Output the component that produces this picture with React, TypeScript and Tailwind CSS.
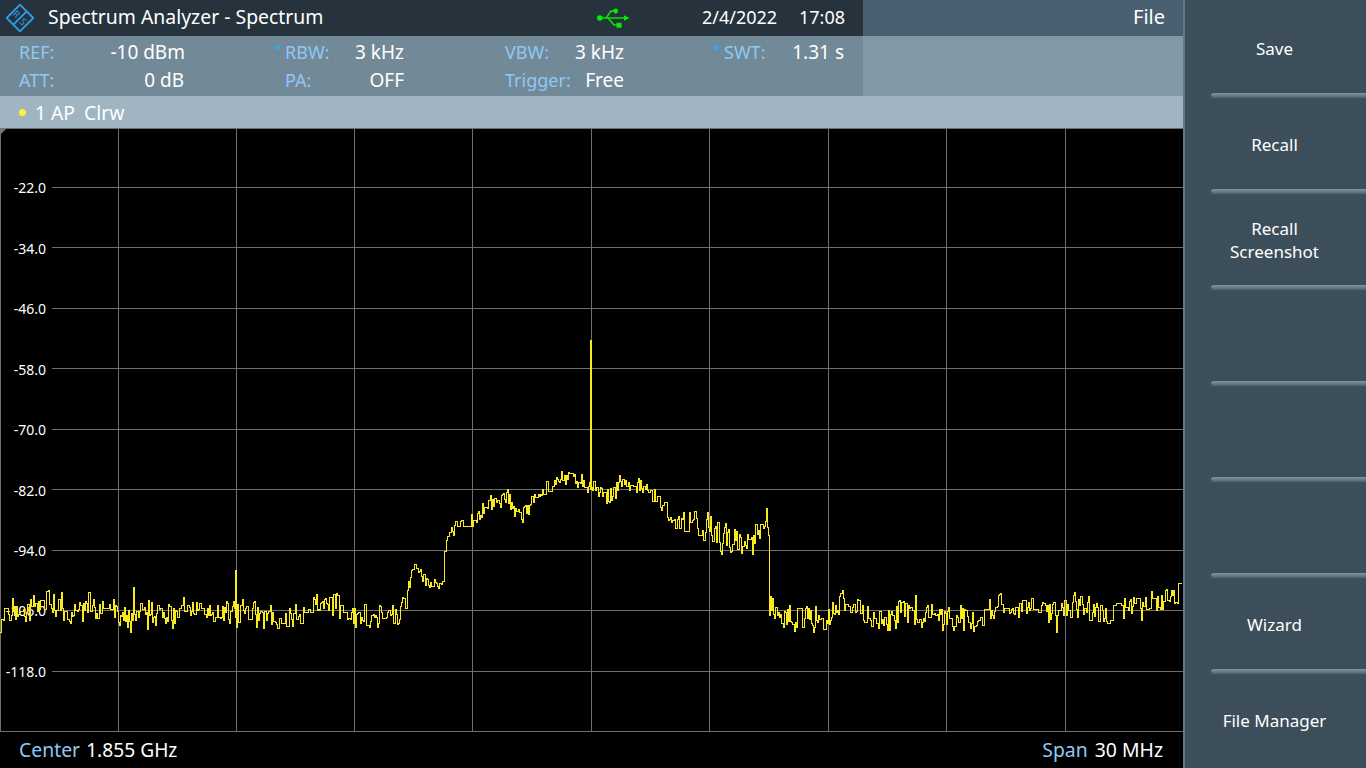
import { useMemo } from 'react';

const FONT = { fontFamily: '"Noto Sans", sans-serif' };

const V_LINES = [118, 236, 354, 472, 591, 709, 828, 946, 1065];
const H_LINES = [
  { y: 59, label: '-22.0' },
  { y: 119.5, label: '-34.0' },
  { y: 180, label: '-46.0' },
  { y: 240.5, label: '-58.0' },
  { y: 301, label: '-70.0' },
  { y: 361.5, label: '-82.0' },
  { y: 422, label: '-94.0' },
  { y: 482, label: '-106.0' },
  { y: 543, label: '-118.0' },
];

// x, y in diagram coordinates, rough outline of the measured spectrum
const ENVELOPE: [number, number][] = [
  [0, 484], [60, 481], [130, 484], [200, 484], [290, 485], [345, 478], [375, 490], [405, 474],
  [412, 445], [416, 438], [425, 450], [441, 455], [444, 412], [450, 400], [470, 390], [490, 375],
  [505, 373], [522, 385], [545, 358], [565, 346], [578, 348], [591, 358], [605, 362], [622, 350],
  [640, 358], [658, 372], [668, 398], [700, 392], [740, 412], [758, 398], [768, 400], [769, 478],
  [800, 482], [870, 484], [885, 492], [900, 482], [965, 490], [1000, 482], [1060, 480], [1110, 484], [1182, 476],
];

// single peaks and dips read off the reference
const SPIKES: Record<number, number> = {
  0: 504, 33: 467, 53: 466, 61: 464, 130: 504, 133: 459, 147: 501, 172: 500,
  813: 504, 887: 502, 915: 467, 963: 502, 1056: 504, 1073: 467, 1166: 461, 1171: 462,
};

function envelopeAt(x: number) {
  for (let i = 1; i < ENVELOPE.length; i++) {
    const [x0, y0] = ENVELOPE[i - 1];
    const [x1, y1] = ENVELOPE[i];
    if (x <= x1) return y0 + ((y1 - y0) * (x - x0)) / (x1 - x0);
  }
  return 480;
}

function noiseAt(x: number) {
  if (x < 410 || x > 769) return 22;
  if (x > 660) return 30;
  if (x > 412 && x < 445) return 12;
  return 15;
}

function buildTrace() {
  let seed = 20220204;
  const rnd = () => {
    seed = (seed * 1664525 + 1013904223) % 4294967296;
    return seed / 4294967296;
  };
  let d = '';
  let y = 484;
  let slow = 0;
  for (let x = 0; x < 1182; x++) {
    slow = slow * 0.9 + (rnd() - 0.5) * 0.35;
    // the trace holds a level for a moment, then jumps
    if (rnd() > 0.25 || x === 769 || x === 444) {
      y = envelopeAt(x) + (rnd() - 0.5 + slow) * noiseAt(x);
    }
    const level = SPIKES[x] !== undefined ? SPIKES[x] : y;
    const ry = Math.round(level) + 0.5;
    d += x === 0 ? `M0 ${ry}` : `H${x + 0.5}V${ry}`;
  }
  return d;
}

function Logo() {
  return (
    <svg width="28" height="28" viewBox="0 0 28 28" className="shrink-0">
      <g transform="rotate(-45 14 14)" fill="none" stroke="#2f9be6" strokeWidth="1.9">
        <rect x="4.6" y="4.6" width="18.8" height="18.8" />
        <line x1="5" y1="14" x2="23" y2="14" />
      </g>
      <text x="10.5" y="13.5" fontSize="9.5" fill="#2f9be6" textAnchor="middle" transform="rotate(45 10.5 10)">R</text>
      <text x="17" y="21" fontSize="9.5" fill="#2f9be6" textAnchor="middle" transform="rotate(45 17 18)">S</text>
    </svg>
  );
}

function UsbIcon() {
  return (
    <svg width="34" height="20" viewBox="0 0 34 20" className="shrink-0">
      <g fill="none" stroke="#00f000" strokeWidth="1.4">
        <path d="M3 10H28" />
        <path d="M9 10L14 3H18" />
        <path d="M11 10L17 17H21" />
      </g>
      <circle cx="2.8" cy="10" r="2.8" fill="#00f000" />
      <circle cx="18.7" cy="3" r="2.4" fill="#00f000" />
      <rect x="19.5" y="14.8" width="5" height="5" fill="#00f000" />
      <path d="M27 7.2L32.5 10L27 12.8Z" fill="#00f000" />
    </svg>
  );
}

function Param({ label, value, dot, labelW, valueW }: { label: string; value: string; dot?: boolean; labelW: string; valueW: string }) {
  return (
    <div className="flex h-[28px] items-center">
      <span className={`relative text-[#8ec8f5] ${labelW}`}>
        {dot && <span className="absolute left-[-10px] top-[6px] h-[5px] w-[5px] rounded-full bg-[#35a4f4]" />}
        {label}
      </span>
      <span className={`text-right text-[19px] text-white ${valueW}`}>{value}</span>
    </div>
  );
}

function SoftKey({ lines, last }: { lines: string[]; last?: boolean }) {
  return (
    <div className="flex h-[96px] flex-col">
      <div className={`flex flex-1 flex-col items-center justify-center pr-[2px] text-[17px] leading-[23px] text-white ${last ? 'pb-[3px]' : 'pt-[1px]'}`}>
        {lines.map((l) => (
          <span key={l}>{l}</span>
        ))}
      </div>
      {!last && <div className="ml-[26px] h-[5px] rounded-l-full bg-gradient-to-b from-[#8196a3] to-[#4e616d]" />}
    </div>
  );
}

export default function App() {
  const trace = useMemo(buildTrace, []);

  return (
    <div className="flex h-[768px] w-[1366px] overflow-hidden bg-black text-[18px]" style={FONT}>
      <div className="flex w-[1183px] shrink-0 flex-col">
        {/* Title */}
        <div className="flex h-[36px] shrink-0 text-white">
          <div className="flex w-[863px] items-center bg-[#26323c] pl-[6px]">
            <Logo />
            <span className="mb-[2px] ml-[14px] w-[549px] shrink-0 text-[19.4px]">Spectrum Analyzer - Spectrum</span>
            <UsbIcon />
            <span className="mb-[2px] ml-[71px] w-[75px] shrink-0">2/4/2022</span>
            <span className="mb-[2px] ml-[22px]">17:08</span>
          </div>
          <div className="flex flex-1 items-center justify-end bg-[#4a5f70] pb-[2px] pr-[18px] text-[20px]">File</div>
        </div>

        {/* Settings */}
        <div className="flex h-[60px] shrink-0">
          <div className="flex w-[863px] bg-[#728a97] pl-[19px] pt-[2px]">
            <div className="w-[266px]">
              <Param label="REF:" value="-10 dBm" labelW="w-[60px]" valueW="w-[106px]" />
              <Param label="ATT:" value="0 dB" labelW="w-[60px]" valueW="w-[105px]" />
            </div>
            <div className="w-[220px]">
              <Param label="RBW:" value="3 kHz" dot labelW="w-[60px]" valueW="w-[59px]" />
              <Param label="PA:" value="OFF" labelW="w-[60px]" valueW="w-[59px]" />
            </div>
            <div className="w-[219px]">
              <Param label="VBW:" value="3 kHz" labelW="w-[60px]" valueW="w-[59px]" />
              <Param label="Trigger:" value="Free" labelW="w-[70px]" valueW="w-[49px]" />
            </div>
            <div>
              <Param label="SWT:" value="1.31 s" dot labelW="w-[60px]" valueW="w-[60px]" />
            </div>
          </div>
          <div className="flex-1 bg-[#8298a5]" />
        </div>

        {/* Trace info */}
        <div className="flex h-[32px] shrink-0 items-center bg-[#a0b4c2] pl-[19px] text-[19.3px] text-white">
          <span className="h-[7px] w-[7px] rounded-full bg-[#fff03a]" />
          <span className="ml-[9px] pt-[2px]">1 AP</span>
          <span className="ml-[9px] pt-[2px]">Clrw</span>
        </div>

        {/* Diagram */}
        <div className="relative h-[604px] shrink-0 bg-black">
          <svg width="1183" height="604" viewBox="0 0 1183 604" className="block">
            <g stroke="#707070" strokeWidth="1" shapeRendering="crispEdges">
              <line x1="0" y1="0.5" x2="1183" y2="0.5" />
              <line x1="0.5" y1="0" x2="0.5" y2="604" />
              <line x1="0" y1="603.5" x2="1183" y2="603.5" />
              {V_LINES.map((x) => (
                <line key={x} x1={x + 0.5} y1="0" x2={x + 0.5} y2="604" />
              ))}
              {H_LINES.map((l) => (
                <line key={l.y} x1="52" y1={Math.floor(l.y) + 0.5} x2="1183" y2={Math.floor(l.y) + 0.5} />
              ))}
            </g>
            <path d="M0 0H7L0 7Z" fill="#777" />
          </svg>
          {H_LINES.map((l) => (
            <span
              key={l.y}
              className="absolute right-[1137px] text-[14px] leading-[20px] text-white"
              style={{ top: l.y - 9 }}
            >
              {l.label}
            </span>
          ))}
          <svg width="1183" height="604" viewBox="0 0 1183 604" className="absolute left-0 top-0">
            <g fill="none" stroke="#f9ea1f" shapeRendering="crispEdges">
              <path d={trace} strokeWidth="1" />
              <line x1="591" y1="212" x2="591" y2="362" strokeWidth="2" />
              <line x1="236" y1="442" x2="236" y2="490" strokeWidth="2" />
            </g>
          </svg>
        </div>

        {/* Footer */}
        <div className="flex flex-1 items-center justify-between bg-black pl-[19px] pr-[20px] text-[19.4px]">
          <span>
            <span className="text-[#8ec8f5]">Center</span>
            <span className="ml-[6px] text-[19.2px] text-white">1.855 GHz</span>
          </span>
          <span>
            <span className="text-[#8ec8f5]">Span</span>
            <span className="ml-[7px] text-white">30 MHz</span>
          </span>
        </div>
      </div>

      {/* Softkeys */}
      <div className="flex-1 border-l-2 border-[#5f7a8a] bg-[#3c4e59] pt-[2px]">
        <SoftKey lines={['Save']} />
        <SoftKey lines={['Recall']} />
        <SoftKey lines={['Recall', 'Screenshot']} />
        <SoftKey lines={[]} />
        <SoftKey lines={[]} />
        <SoftKey lines={[]} />
        <SoftKey lines={['Wizard']} />
        <SoftKey lines={['File Manager']} last />
      </div>
    </div>
  );
}
